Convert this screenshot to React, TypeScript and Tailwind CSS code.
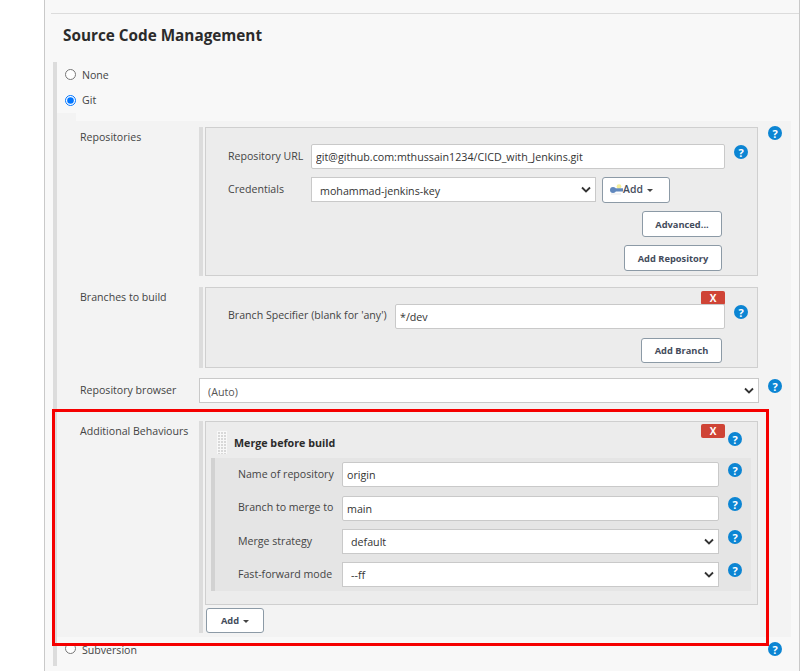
import { ReactNode } from "react";

const fieldClass =
  "block h-[25px] rounded-[2px] border border-[#c9c9c9] bg-white text-[10.7px] text-[#333] outline-none";

function Help({ className = "" }: { className?: string }) {
  return (
    <span
      className={`flex h-[14px] w-[14px] shrink-0 items-center justify-center rounded-full bg-[#0c85d3] text-[11px] font-bold leading-none text-white ${className}`}
    >
      ?
    </span>
  );
}

function Btn({ children, className = "", text = "text-[9.3px] font-bold" }: { children: ReactNode; className?: string; text?: string }) {
  return (
    <button
      className={`flex items-center justify-center rounded-[3px] border border-[#8c9aa6] bg-white text-[#444c5c] ${text} ${className}`}
    >
      {children}
    </button>
  );
}

function Caret() {
  return <span className="ml-[4px] mt-[1px] border-x-[3px] border-t-[3px] border-x-transparent border-t-[#444]" />;
}

function CloseBtn({ className = "" }: { className?: string }) {
  return (
    <button
      className={`flex h-[14px] w-[24px] items-center justify-center rounded-[2px] bg-[#cf4436] text-[10px] font-bold leading-none text-white ${className}`}
    >
      X
    </button>
  );
}

function TextField({ value, className = "" }: { value: string; className?: string }) {
  return <input readOnly value={value} className={`${fieldClass} pl-[4px] ${className}`} />;
}

function SelectField({ value, className = "", inner = "" }: { value: string; className?: string; inner?: string }) {
  return (
    <div className={`relative ${className}`}>
      <select className={`${fieldClass} w-full appearance-none rounded-none pl-[8px] ${inner}`}>
        <option>{value}</option>
      </select>
      <svg viewBox="0 0 10 7" className="pointer-events-none absolute right-[5px] top-[9px] h-[7px] w-[10px]">
        <path d="M1 1.5 5 5.5 9 1.5" fill="none" stroke="#333" strokeWidth="1.8" />
      </svg>
    </div>
  );
}

function Grip() {
  const dots = [];
  for (let y = 0; y < 8; y++) {
    for (let x = 0; x < 3; x++) {
      dots.push(<rect key={`${x}-${y}`} x={1 + x * 3} y={1 + y * 3} width="2" height="2" fill="#d8d8d8" />);
    }
  }
  return (
    <svg viewBox="0 0 10 23" className="ml-[11px] mt-[9px] h-[23px] w-[10px] shrink-0 bg-[#f8f8f8]">
      {dots}
    </svg>
  );
}

function KeyIcon() {
  return (
    <svg viewBox="0 0 13 12" className="h-[12px] w-[13px] shrink-0">
      <circle cx="9" cy="2.6" r="2.4" fill="#f4ee9a" />
      <circle cx="3" cy="6" r="3" fill="#6188bd" />
      <rect x="4" y="4.3" width="9" height="3.2" fill="#6188bd" />
      <rect x="1" y="9.5" width="10" height="1" fill="#e8e8e8" />
    </svg>
  );
}

function Row({ label, top = "", pad = "pt-[3px]", help = "", children }: { label: string; top?: string; pad?: string; help?: string; children: ReactNode }) {
  return (
    <div className={`flex ${top}`}>
      <div className={`w-[142px] shrink-0 pl-[23px] text-[10.6px] text-[#444] ${pad}`}>{label}</div>
      {children}
      <Help className={`ml-[9px] ${help}`} />
    </div>
  );
}

function Bar() {
  return <div className="w-[4px] shrink-0 bg-[#dcdcdc]" />;
}

function MergeRow({ label, top = "", pad = "pt-[5px]", children }: { label: string; top?: string; pad?: string; children: ReactNode }) {
  return (
    <div className={`flex ${top}`}>
      <div className={`w-[127px] shrink-0 pl-[23px] text-[10.6px] text-[#444] ${pad}`}>{label}</div>
      {children}
      <Help className="ml-[9px] mt-[1px]" />
    </div>
  );
}

export default function App() {
  return (
    <div className="relative flex h-[671px] w-[811px] overflow-hidden bg-white font-['Open_Sans',sans-serif] text-[#333]">
      <div className="w-[44px] shrink-0" />
      <main className="h-full w-[756px] shrink-0 border-x border-[#c9c9c9] bg-[#f8f8f8]">
        <div className="ml-[6px] mt-[13px] border-t border-[#dcdcdc] pl-[12px] pt-[11px] text-[15.3px] font-bold leading-[20px] text-[#2b2b2b]">
          Source Code Management
        </div>

        <div className="ml-[8px] mt-[17px] h-[604px] w-[738px] border-l-4 border-[#dcdcdc]">
          <label className="flex h-[25px] items-center pl-[8px] text-[10.6px] text-[#444]">
            <input type="radio" name="scm" className="m-0 h-[11px] w-[11px]" />
            <span className="ml-[6px] mt-[2px]">None</span>
          </label>
          <label className="flex h-[26px] items-center pl-[8px] text-[10.6px] text-[#444]">
            <input type="radio" name="scm" defaultChecked className="m-0 h-[11px] w-[11px]" />
            <span className="ml-[6px] mt-[2px]">Git</span>
          </label>

          <div className="h-[8px] w-[19px] bg-[#f3f3f3]" />
          <div className="h-[516px] w-[734px] bg-[#f3f3f3] pt-[6px]">
            <Row label="Repositories" help="mt-[-1px]">
              <div className="flex w-[560px] gap-[2px]">
                <Bar />
                <div className="h-[149px] w-[553px] border border-[#cfcfcf] bg-[#ececec] pt-[16px]">
                  <div className="flex">
                    <div className="w-[105px] pl-[22px] pt-[5px] text-[10.6px] text-[#444]">Repository URL</div>
                    <TextField value="git@github.com:mthussain1234/CICD_with_Jenkins.git" className="w-[414px]" />
                    <Help className="ml-[9px] mt-[1px]" />
                  </div>
                  <div className="mt-[8px] flex">
                    <div className="w-[105px] pl-[22px] pt-[5px] text-[10.6px] text-[#444]">Credentials</div>
                    <SelectField value="mohammad-jenkins-key" className="w-[285px]" inner="pt-[3px]" />
                    <Btn className="ml-[6px] h-[26px] w-[68px] pr-[9px]" text="text-[10.4px] font-semibold">
                      <KeyIcon />
                      Add
                      <Caret />
                    </Btn>
                  </div>
                  <div className="flex flex-col items-end pr-[35px]">
                    <Btn className="mt-[8px] h-[26px] w-[80px] pt-[1px]">Advanced...</Btn>
                    <Btn className="mt-[8px] h-[26px] w-[98px] pt-[1px]">Add Repository</Btn>
                  </div>
                </div>
              </div>
            </Row>

            <Row label="Branches to build" top="mt-[11px]" help="invisible">
              <div className="flex w-[560px] gap-[2px]">
                <Bar />
                <div className="h-[81px] w-[553px] border border-[#cfcfcf] bg-[#ececec] pt-[3px]">
                  <div className="flex justify-end pr-[32px]">
                    <CloseBtn />
                  </div>
                  <div className="mt-[-1px] flex">
                    <div className="w-[189px] pl-[22px] pt-[4px] text-[10.6px] text-[#444]">Branch Specifier (blank for 'any')</div>
                    <TextField value="*/dev" className="w-[330px]" />
                    <Help className="ml-[9px] mt-[1px]" />
                  </div>
                  <div className="flex justify-end pr-[35px]">
                    <Btn className="mt-[9px] h-[25px] w-[81px]">Add Branch</Btn>
                  </div>
                </div>
              </div>
            </Row>

            <Row label="Repository browser" top="mt-[10px]" pad="pt-[5px]" help="mt-[1px]">
              <SelectField value="(Auto)" className="w-[560px]" inner="pt-[3px] text-[#555]" />
            </Row>

            <Row label="Additional Behaviours" top="mt-[18px]" help="invisible">
              <div className="flex h-[212px] w-[560px] gap-[2px]">
                <Bar />
                <div className="w-[553px]">
                  <div className="h-[184px] border border-[#cfcfcf] bg-[#ececec]">
                    <div className="flex h-[36px] items-start pr-[15px]">
                      <Grip />
                      <div className="ml-[7px] mt-[11px] text-[10.7px] font-bold leading-[20px] text-[#2b2b2b]">Merge before build</div>
                      <CloseBtn className="ml-auto mt-[2px]" />
                      <Help className="ml-[3px] mt-[10px]" />
                    </div>
                    <div className="ml-[5px] h-[133px] w-[540px] border-l-4 border-[#d2d2d2] bg-[#e5e5e5] pt-[4px]">
                      <MergeRow label="Name of repository">
                        <TextField value="origin" className="w-[377px]" />
                      </MergeRow>
                      <MergeRow label="Branch to merge to" top="mt-[9px]" pad="pt-[4px]">
                        <TextField value="main" className="w-[377px]" />
                      </MergeRow>
                      <MergeRow label="Merge strategy" top="mt-[8px]">
                        <SelectField value="default" className="w-[377px]" inner="pt-[1px]" />
                      </MergeRow>
                      <MergeRow label="Fast-forward mode" top="mt-[8px]">
                        <SelectField value="--ff" className="w-[377px]" inner="pt-[1px]" />
                      </MergeRow>
                    </div>
                  </div>
                  <Btn className="ml-[1px] mt-[3px] h-[25px] w-[58px]">
                    Add
                    <Caret />
                  </Btn>
                </div>
              </div>
            </Row>
          </div>

          <div className="flex h-[29px] w-[734px] items-start pl-[8px] pt-[5px] text-[10.6px] text-[#444]">
            <input type="radio" name="scm" className="m-0 mt-[1px] h-[11px] w-[11px]" />
            <span className="ml-[6px] mt-[1px]">Subversion</span>
            <Help className="ml-auto mr-[9px]" />
          </div>
        </div>
      </main>

      <div className="pointer-events-none absolute left-[52px] top-[409px] h-[237px] w-[717px] border-[3px] border-[#f50000]" />
    </div>
  );
}
